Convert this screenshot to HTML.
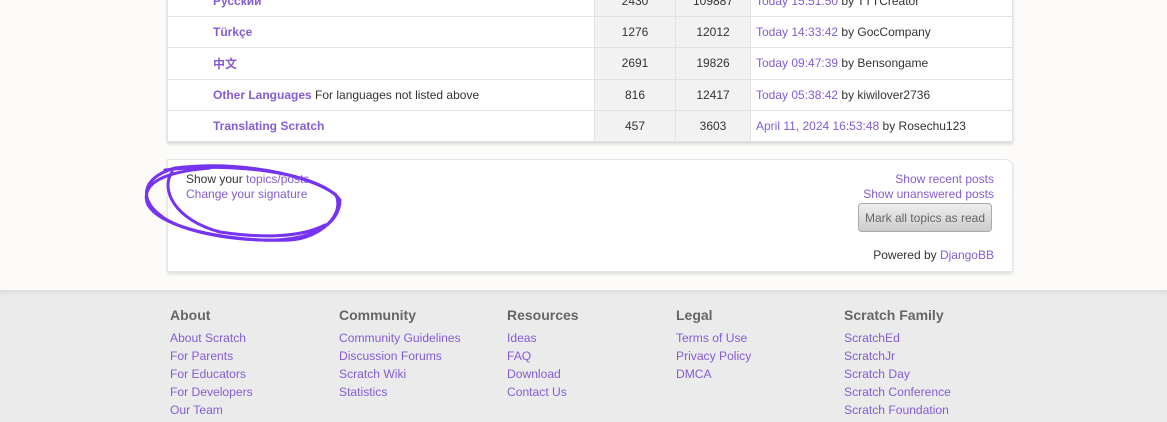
<!DOCTYPE html>
<html><head><meta charset="utf-8"><style>
body{margin:0;width:1167px;height:422px;overflow:hidden;background:#fcfbf9;font-family:"Liberation Sans","Noto Sans CJK SC",sans-serif;font-size:12px;color:#333;position:relative}
a{color:#855cd6;text-decoration:none}
table{position:absolute;left:167px;top:-15px;width:846px;border-collapse:collapse;background:#fff;box-shadow:0 2px 3px rgba(0,0,0,.15)}
td{height:30.2px;border:1px solid #e2e2e2;padding:0;vertical-align:middle}
td.n{background:#f2f2f2;text-align:center}
td.f{padding-left:45px}
td.f a{font-weight:bold}
td.l{padding-left:5px}
.box{position:absolute;left:167px;top:159px;width:844px;height:111px;background:#fff;border:1px solid #e4e4e4;border-top-right-radius:8px;box-shadow:0 2px 3px rgba(0,0,0,.12)}
.foot{position:absolute;left:0;top:290px;width:1167px;height:132px;background:#ebebeb;box-shadow:inset 0 6px 6px -4px rgba(0,0,0,.08)}
.col{position:absolute;top:17px}
.col h4{margin:0 0 6px;font-size:14px;color:#666;line-height:16px}
.col a{display:block;line-height:18px;font-size:12.1px}
.btn{position:absolute;right:20px;top:43px;width:134px;height:29px;border:1px solid #aaa;border-radius:4px;background:linear-gradient(#eee,#ccc);color:#666;font-size:12px;line-height:29px;text-align:center;box-sizing:border-box}
</style></head><body>
<table>
<col style="width:427px"><col style="width:81px"><col style="width:75px"><col>
<tr><td class="f"><a>Русский</a></td><td class="n">2430</td><td class="n">109887</td><td class="l"><a>Today 15:51:50</a> by TTTCreator</td></tr>
<tr><td class="f"><a>Türkçe</a></td><td class="n">1276</td><td class="n">12012</td><td class="l"><a>Today 14:33:42</a> by GocCompany</td></tr>
<tr><td class="f"><a>中文</a></td><td class="n">2691</td><td class="n">19826</td><td class="l"><a>Today 09:47:39</a> by Bensongame</td></tr>
<tr><td class="f"><a>Other Languages</a> For languages not listed above</td><td class="n">816</td><td class="n">12417</td><td class="l"><a>Today 05:38:42</a> by kiwilover2736</td></tr>
<tr><td class="f"><a>Translating Scratch</a></td><td class="n">457</td><td class="n">3603</td><td class="l"><a>April 11, 2024 16:53:48</a> by Rosechu123</td></tr>
</table>
<div class="box">
<div style="position:absolute;left:18px;top:12px;line-height:15px">Show your <a>topics/posts</a><br><a>Change your signature</a></div>
<div style="position:absolute;right:18px;top:12px;line-height:15px;text-align:right"><a>Show recent posts</a><br><a>Show unanswered posts</a></div>
<div class="btn">Mark all topics as read</div>
<div style="position:absolute;right:18px;top:88px">Powered by <a>DjangoBB</a></div>
</div>
<svg style="position:absolute;left:0;top:0" width="1167" height="422"><g fill="none" stroke="#7634f0" stroke-width="3" stroke-linecap="round">
<path d="M175 168 C240 160 310 175 336 195 C345 215 320 238 290 240 C240 242 180 232 160 215 C140 200 140 178 175 168"/>
<path d="M165 170 C230 162 320 172 340 200 C340 225 310 242 260 240 C210 238 160 225 148 205 C140 185 160 172 210 168"/>
<path d="M172 172 C160 190 175 220 220 232 C260 238 300 238 325 225"/>
</g></svg>
<div class="foot">
<div class="col" style="left:170px"><h4>About</h4><a>About Scratch</a><a>For Parents</a><a>For Educators</a><a>For Developers</a><a>Our Team</a></div>
<div class="col" style="left:339px"><h4>Community</h4><a>Community Guidelines</a><a>Discussion Forums</a><a>Scratch Wiki</a><a>Statistics</a></div>
<div class="col" style="left:507px"><h4>Resources</h4><a>Ideas</a><a>FAQ</a><a>Download</a><a>Contact Us</a></div>
<div class="col" style="left:676px"><h4>Legal</h4><a>Terms of Use</a><a>Privacy Policy</a><a>DMCA</a></div>
<div class="col" style="left:844px"><h4>Scratch Family</h4><a>ScratchEd</a><a>ScratchJr</a><a>Scratch Day</a><a>Scratch Conference</a><a>Scratch Foundation</a></div>
</div>
</body></html>
